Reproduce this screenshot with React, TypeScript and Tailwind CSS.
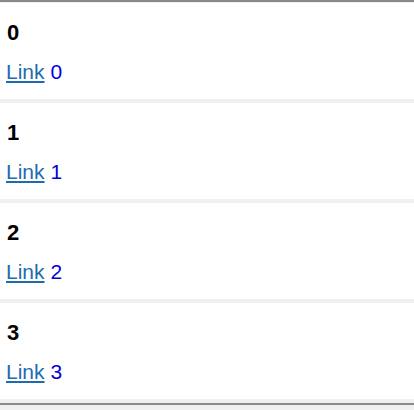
export default function App() {
  const items = [0, 1, 2, 3];
  return (
    <div className="w-[414px] h-[410px] bg-[#f0f0f0] font-['Liberation_Sans',Arial,sans-serif]">
      <div className="border-t-2 border-b-2 border-[#8a8a8a] bg-[#f0f0f0]">
        <div className="flex flex-col gap-1 pt-px pb-1">
          {items.map(i => (
            <div key={i} className="bg-white h-[96px] px-[6px] pt-[17px]">
              <div className="text-[22px] leading-[26px] font-bold text-black pl-px">{i}</div>
              <div className="mt-[13px] text-[21px] leading-[25px]">
                <a href="#" className="text-[#1e6bb0] underline">Link</a>{' '}
                <span className="text-[#0000e0]">{i}</span>
              </div>
            </div>
          ))}
        </div>
      </div>
    </div>
  );
}
